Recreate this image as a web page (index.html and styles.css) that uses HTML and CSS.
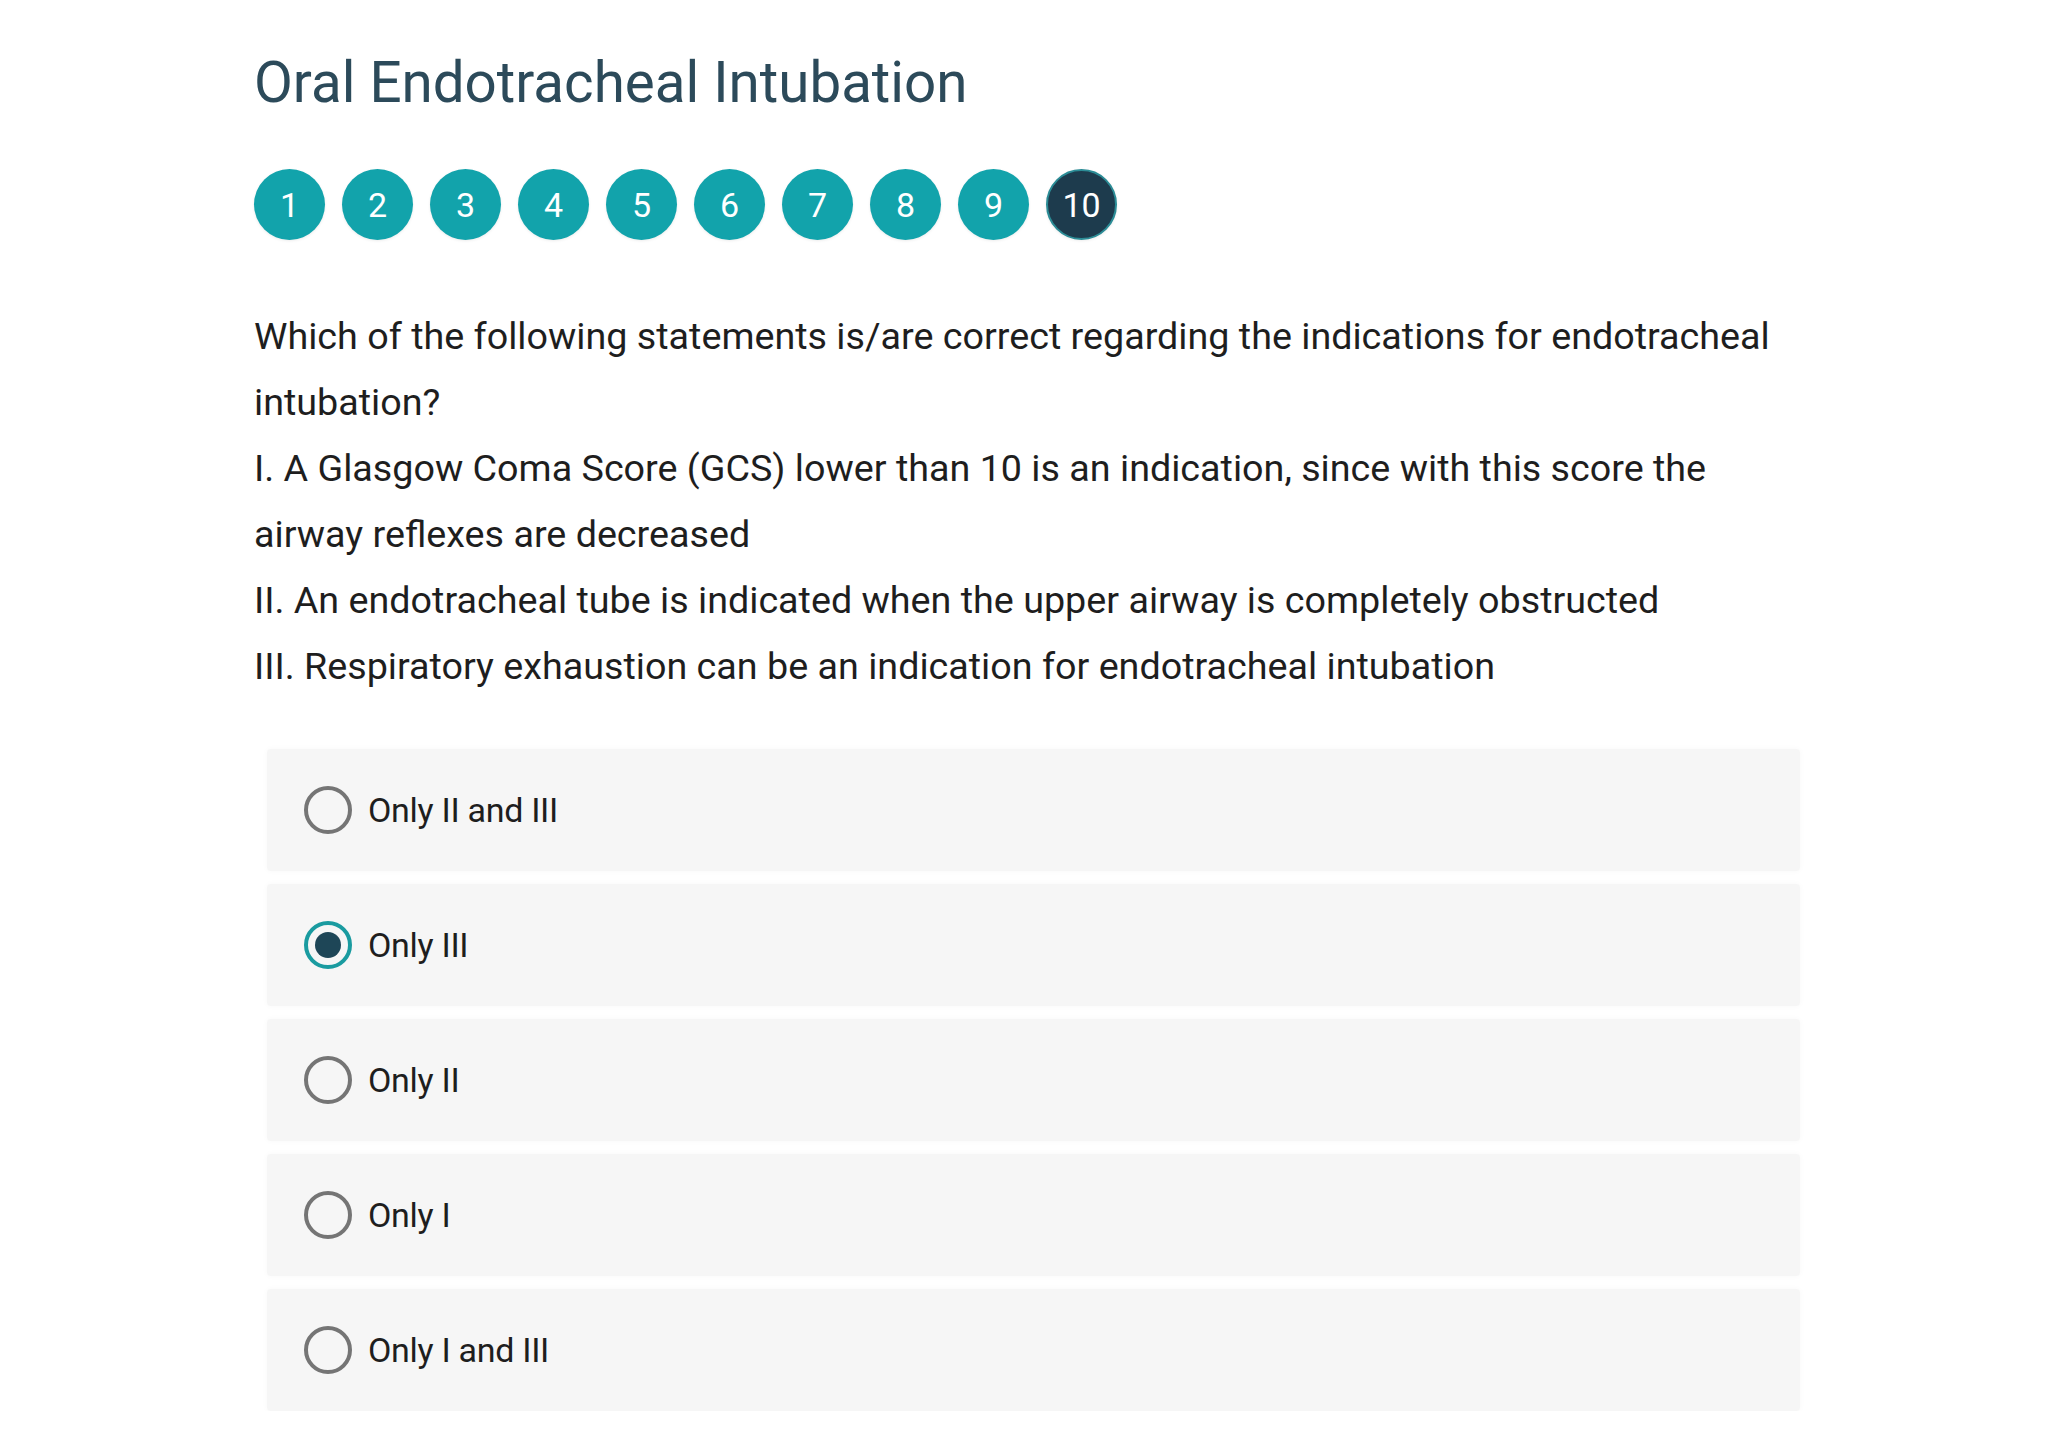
FILE: index.html
```html
<!DOCTYPE html>
<html lang="en">
<head>
    <meta charset="UTF-8">
    <meta name="viewport" content="width=device-width, initial-scale=1.0">
    <title>Oral Endotracheal Intubation - Quiz</title>
    <link rel="stylesheet" href="styles.css">
</head>
<body>
    <div class="quiz">
        <h1 class="quiz-title">Oral Endotracheal Intubation</h1>

        <div class="steps">
            <span class="step">1</span>
            <span class="step">2</span>
            <span class="step">3</span>
            <span class="step">4</span>
            <span class="step">5</span>
            <span class="step">6</span>
            <span class="step">7</span>
            <span class="step">8</span>
            <span class="step">9</span>
            <span class="step active">10</span>
        </div>

        <div class="question">
            <p>Which of the following statements is/are correct regarding the indications for endotracheal intubation?</p>
            <p>I. A Glasgow Coma Score (GCS) lower than 10 is an indication, since with this score the airway reflexes are decreased</p>
            <p>II. An endotracheal tube is indicated when the upper airway is completely obstructed</p>
            <p>III. Respiratory exhaustion can be an indication for endotracheal intubation</p>
        </div>

        <div class="answers">
            <label class="answer">
                <input type="radio" name="answer">
                <span class="radio"></span>
                <span class="answer-text">Only II and III</span>
            </label>
            <label class="answer">
                <input type="radio" name="answer" checked>
                <span class="radio"></span>
                <span class="answer-text">Only III</span>
            </label>
            <label class="answer">
                <input type="radio" name="answer">
                <span class="radio"></span>
                <span class="answer-text">Only II</span>
            </label>
            <label class="answer">
                <input type="radio" name="answer">
                <span class="radio"></span>
                <span class="answer-text">Only I</span>
            </label>
            <label class="answer">
                <input type="radio" name="answer">
                <span class="radio"></span>
                <span class="answer-text">Only I and III</span>
            </label>
        </div>
    </div>
</body>
</html>
```

FILE: styles.css
```css
* {
    box-sizing: border-box;
    margin: 0;
    padding: 0;
}

body {
    font-family: Roboto, 'Liberation Sans', Arial, sans-serif;
    background: #fff;
    color: #1e1e1e;
}

.quiz {
    width: 1800px;
    padding: 49px 0 0 254px;
}

.quiz-title {
    font-size: 56.5px;
    font-weight: 400;
    line-height: 68px;
    color: #2c4a5a;
}

.steps {
    display: flex;
    gap: 17px;
    margin-top: 52px;
}

.step {
    width: 71px;
    height: 71px;
    border-radius: 50%;
    background: #12a3ab;
    color: #fff;
    font-size: 34px;
    display: flex;
    align-items: center;
    justify-content: center;
    box-shadow: 0 1px 3px rgba(0, 0, 0, 0.08);
}

.step.active {
    background: #1d3b4d;
    border: 2px solid #2b8c96;
}

.question {
    margin-top: 63px;
    font-size: 37.7px;
    line-height: 66px;
}

.answers {
    margin: 50px 0 0 13px;
    display: flex;
    flex-direction: column;
    gap: 13px;
}

.answer {
    height: 122px;
    display: flex;
    align-items: center;
    gap: 16px;
    padding-left: 37px;
    background: #f6f6f6;
    border-radius: 4px;
    box-shadow: 0 0 6px rgba(0, 0, 0, 0.03);
    cursor: pointer;
}

.answer input {
    display: none;
}

.radio {
    width: 48px;
    height: 48px;
    border: 4px solid #757575;
    border-radius: 50%;
    display: flex;
    align-items: center;
    justify-content: center;
}

.answer input:checked + .radio {
    border-color: #1a9ba0;
}

.answer input:checked + .radio::after {
    content: '';
    width: 26px;
    height: 26px;
    border-radius: 50%;
    background: #1e4657;
}

.answer-text {
    font-size: 34px;
    letter-spacing: -0.3px;
    color: #1e1e1e;
}
```
